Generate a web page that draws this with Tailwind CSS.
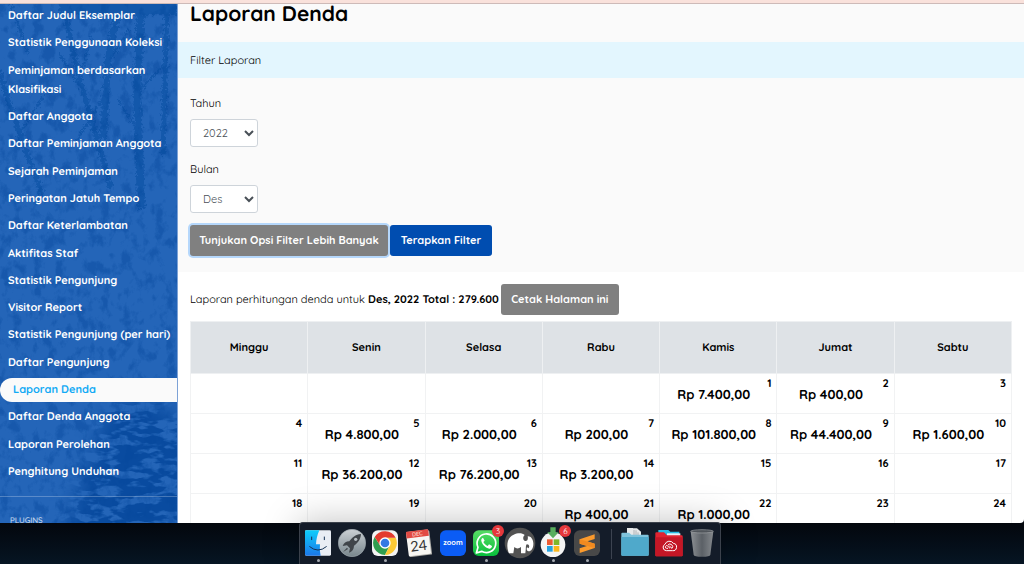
<!DOCTYPE html>
<html lang="id">
<head>
  <meta charset="UTF-8">
  <meta name="viewport" content="width=device-width, initial-scale=1.0">
  <title>Laporan Denda</title>
  <script src="https://cdn.jsdelivr.net/npm/@tailwindcss/browser@4"></script>
</head>
<body class="flex h-screen flex-col overflow-hidden bg-[#040b14] font-[Quicksand,Lato,sans-serif] text-[11px] text-black [text-rendering:geometricPrecision]">
  <div class="h-1 shrink-0 border-b border-[#cdbab8] bg-[#f9e1db]"></div>

  <div class="flex min-h-0 flex-1 overflow-hidden rounded-br bg-white">
    <aside class="relative w-[178px] shrink-0 overflow-hidden border-r border-[#7da2d6] bg-[#2465b8] font-bold text-white">
      <!-- forest and water texture -->
      <svg class="absolute inset-0 h-full w-full" viewBox="0 0 178 519" preserveAspectRatio="none" aria-hidden="true">
        <defs>
          <filter id="grain" x="0" y="0" width="100%" height="100%" color-interpolation-filters="sRGB">
            <feTurbulence type="fractalNoise" baseFrequency="0.09 0.07" numOctaves="6" seed="4"/>
            <feColorMatrix values="0 0 0 0 .02  0 0 0 0 .28  0 0 0 0 .61  5 0 0 0 -2.5"/>
          </filter>
          <filter id="waves" x="0" y="0" width="100%" height="100%" color-interpolation-filters="sRGB">
            <feTurbulence type="fractalNoise" baseFrequency="0.05 0.12" numOctaves="3" seed="7"/>
            <feColorMatrix values="0 0 0 0 .02  0 0 0 0 .28  0 0 0 0 .61  9 0 0 0 -3.7"/>
          </filter>
          <filter id="rough" x="-10%" y="-10%" width="120%" height="120%">
            <feTurbulence type="fractalNoise" baseFrequency="0.4" numOctaves="3" seed="2"/>
            <feDisplacementMap in="SourceGraphic" scale="8" xChannelSelector="R" yChannelSelector="G"/>
            <feGaussianBlur stdDeviation="0.6"/>
          </filter>
          <filter id="soft"><feGaussianBlur stdDeviation="10"/></filter>
          <mask id="bottom"><path d="M60 540 L85 470 L110 400 L150 395 L200 430 V540Z" fill="#fff" filter="url(#soft)"/></mask>
        </defs>
        <rect width="178" height="519" filter="url(#grain)" opacity=".4"/>
        <g filter="url(#rough)" fill="none" stroke="#06489c" opacity=".45">
          <path d="M142 -5L138 90L142 205" stroke-width="8"/>
          <path d="M120 -5L108 60L104 135" stroke-width="7"/>
          <path d="M62 -5L80 75L112 185" stroke-width="5"/>
          <path d="M-4 60L20 130L42 190M168 -5L164 150" stroke-width="5"/>
          <path d="M10 -5L28 50M80 75L92 30M85 90L60 50M108 60L130 25M106 90L75 140M138 90L165 60M140 130L118 95M20 130L45 90" stroke-width="2"/>
          <path d="M60 4H178" stroke-width="14"/>
        </g>
        <g mask="url(#bottom)"><rect y="370" width="178" height="149" filter="url(#waves)" opacity=".85"/></g>
      </svg>
      <nav class="relative">
        <ul class="mt-[2px] flex h-[475px] flex-col justify-between leading-[19px] whitespace-nowrap">
          <li class="px-2"><a href="#">Daftar Judul Eksemplar</a></li>
          <li class="px-2"><a href="#">Statistik Penggunaan Koleksi</a></li>
          <li class="px-2"><a href="#">Peminjaman berdasarkan<br>Klasifikasi</a></li>
          <li class="px-2"><a href="#">Daftar Anggota</a></li>
          <li class="px-2"><a href="#">Daftar Peminjaman Anggota</a></li>
          <li class="px-2"><a href="#">Sejarah Peminjaman</a></li>
          <li class="px-2"><a href="#">Peringatan Jatuh Tempo</a></li>
          <li class="px-2"><a href="#">Daftar Keterlambatan</a></li>
          <li class="px-2"><a href="#">Aktifitas Staf</a></li>
          <li class="px-2"><a href="#">Statistik Pengunjung</a></li>
          <li class="px-2"><a href="#">Visitor Report</a></li>
          <li class="px-2"><a href="#">Statistik Pengunjung (per hari)</a></li>
          <li class="px-2"><a href="#">Daftar Pengunjung</a></li>
          <li class="-mt-0.5 -mb-[3px] h-6 rounded-l-full bg-[#fafafa] pt-0.5 pl-[13px] text-[#12aaf5]"><a href="#">Laporan Denda</a></li>
          <li class="px-2"><a href="#">Daftar Denda Anggota</a></li>
          <li class="px-2"><a href="#">Laporan Perolehan</a></li>
          <li class="px-2"><a href="#">Penghitung Unduhan</a></li>
        </ul>
        <hr class="mt-[15px] border-white/25">
        <p class="mt-[15px] px-[10px] text-[8px] leading-4 font-medium text-white/80">PLUGINS</p>
      </nav>
    </aside>

    <main class="min-w-0 flex-1 overflow-hidden">
      <section class="bg-[#fafafa] pb-4">
        <h1 class="h-[38px] px-3 text-[21px] leading-5 font-bold text-black">Laporan Denda</h1>
        <div class="bg-[#e3f6fe] px-3 leading-9">Filter Laporan</div>
        <form class="px-3 pt-[15px]">
          <label for="year" class="block leading-5">Tahun</label>
          <select id="year" class="mt-[6px] block h-7 w-[68px] rounded-[3px] border border-[#ced4da] bg-white pl-2 text-[#495057]">
            <option>2022</option>
          </select>
          <label for="month" class="mt-3 block leading-5">Bulan</label>
          <select id="month" class="mt-[6px] block h-7 w-[68px] rounded-[3px] border border-[#ced4da] bg-white pl-2 text-[#495057]">
            <option>Des</option>
          </select>
          <div class="mt-3 flex gap-[2px] font-bold text-white">
            <button type="button" class="h-[31px] w-[198px] rounded-[3px] bg-[#808080] ring-2 ring-[#b5d7fb]">Tunjukan Opsi Filter Lebih Banyak</button>
            <button type="button" class="h-[31px] w-[102px] rounded-[3px] bg-[#004db0]">Terapkan Filter</button>
          </div>
        </form>
      </section>

      <section class="px-3 pt-3">
        <div class="flex items-center gap-0.5">
          <p>Laporan perhitungan denda untuk <strong class="font-bold">Des, 2022 Total : 279.600</strong></p>
          <button type="button" class="h-[31px] w-[118px] rounded-[3px] bg-[#808080] font-bold text-white">Cetak Halaman ini</button>
        </div>
        <div class="mt-[6px]">
          <table class="w-full table-fixed border-collapse font-bold text-black">
            <thead>
              <tr class="h-[52px] bg-[#dee2e6]">
                <th class="border border-[#eef0f2]">Minggu</th>
                <th class="border border-[#eef0f2]">Senin</th>
                <th class="border border-[#eef0f2]">Selasa</th>
                <th class="border border-[#eef0f2]">Rabu</th>
                <th class="border border-[#eef0f2]">Kamis</th>
                <th class="border border-[#eef0f2]">Jumat</th>
                <th class="border border-[#eef0f2]">Sabtu</th>
              </tr>
            </thead>
            <tbody id="calendar"></tbody>
          </table>
        </div>
      </section>
    </main>
  </div>

  <footer class="relative flex h-[41px] shrink-0 justify-center bg-linear-to-b from-[#03070d] to-[#061523] pr-1">
    <div class="-mt-px flex h-[42px] rounded-t border border-b-0 border-[#3b414b] bg-[#141c29] px-1 pt-[6px] shadow-[0_0_36px_rgba(0,0,0,0.25)]">
      <ul class="flex w-[297px] justify-between">
        <li class="flex flex-col items-center">
          <svg class="size-7" viewBox="0 0 84 84" role="img" aria-label="Finder">
            <defs><linearGradient id="fb" x2="0" y2="1"><stop stop-color="#0dcdfb"/><stop offset="1" stop-color="#1c78ea"/></linearGradient></defs>
            <rect x="3" y="4" width="78" height="76" rx="4" fill="#e9edf4"/>
            <path d="M7 4H46C39 20 37 32 36 46H48C47 60 48 70 50 80H7Q3 80 3 76V8Q3 4 7 4Z" fill="url(#fb)"/>
            <path d="M23 24V32M61 24V32M17 53Q42 74 67 53" fill="none" stroke="#153255" stroke-width="3" stroke-linecap="round"/>
          </svg>
          <span class="mt-0.5 size-[3px] rounded-full bg-[#a5aab1]"></span>
        </li>
        <li class="flex flex-col items-center">
          <svg class="size-7" viewBox="0 0 84 84" role="img" aria-label="Launchpad">
            <defs><linearGradient id="lp" x2="0" y2="1"><stop stop-color="#cbd0d4"/><stop offset="1" stop-color="#78868d"/></linearGradient></defs>
            <circle cx="42" cy="42" r="41" fill="url(#lp)" stroke="#9ba4aa" stroke-width="2"/>
            <path d="M69 15C52 16 42 26 34 37C24 37 17 43 14 51L27 49L36 58L33 71C42 68 48 61 48 50C59 42 68 32 69 15Z" fill="#40454a"/>
            <circle cx="53" cy="31" r="5" fill="#b4bbc0"/><path d="M27 56L15 69L30 60Z" fill="#40454a"/>
          </svg>
        </li>
        <li class="flex flex-col items-center">
          <svg class="size-7" viewBox="0 0 84 84" role="img" aria-label="Chrome">
            <rect x="3" y="4" width="78" height="77" rx="18" fill="#f3f3f3"/>
            <path d="M28 50L11 24A36 36 0 0 0 42 78L56 50Z" fill="#2f9e4f"/>
            <path d="M42 26H74A36 36 0 0 1 42 78L56 50Z" fill="#fcc934"/>
            <path d="M42 42L28 50L11 24A36 36 0 0 1 74 26H42Z" fill="#e33b2e"/>
            <circle cx="42" cy="42" r="17" fill="#fff"/><circle cx="42" cy="42" r="13" fill="#3379e4"/>
          </svg>
          <span class="mt-0.5 size-[3px] rounded-full bg-[#a5aab1]"></span>
        </li>
        <li class="flex flex-col items-center">
          <svg class="size-7" viewBox="0 0 84 84" role="img" aria-label="Kalender">
            <g transform="rotate(-7 42 42)">
              <rect x="9" y="8" width="68" height="73" rx="3" fill="#aaa9a5"/>
              <rect x="7" y="5" width="67" height="73" rx="3" fill="#f7f6f3"/>
              <path d="M10 4H71Q74 4 74 7V24H7V7Q7 4 10 4Z" fill="#e24a43"/>
              <text x="40" y="20" text-anchor="middle" font-size="16" fill="#ffe4df" font-family="Lato">DEC</text>
              <text x="40" y="65" text-anchor="middle" font-size="43" fill="#333" font-family="Lato">24</text>
            </g>
          </svg>
        </li>
        <li class="flex flex-col items-center">
          <svg class="size-7" viewBox="0 0 84 84" role="img" aria-label="Zoom">
            <rect x="3" y="4" width="78" height="77" rx="17" fill="#0b5cf5"/>
            <text x="42" y="49" text-anchor="middle" font-size="22" font-weight="700" fill="#fff" font-family="Quicksand">zoom</text>
          </svg>
        </li>
        <li class="relative flex flex-col items-center">
          <svg class="size-7" viewBox="0 0 84 84" role="img" aria-label="WhatsApp">
            <defs><linearGradient id="wa" x2="0" y2="1"><stop stop-color="#58dc65"/><stop offset="1" stop-color="#08bf3c"/></linearGradient></defs>
            <rect x="3" y="4" width="78" height="77" rx="17" fill="url(#wa)"/>
            <path d="M13 72L18 55A28 28 0 1 1 29 67Z" fill="none" stroke="#fff" stroke-width="5" stroke-linejoin="round"/>
            <path d="M33 26C29 27 27 31 28 36C31 48 41 57 52 59C57 59 60 55 60 51L51 46L47 51C41 49 37 44 34 39L38 35Z" fill="#fff"/>
          </svg>
          <span class="absolute -top-1 -right-1 size-3 rounded-full bg-[#e5383c] text-center text-[8px] leading-3 text-white">3</span>
          <span class="mt-0.5 size-[3px] rounded-full bg-[#a5aab1]"></span>
        </li>
        <li class="-mx-0.5 -mt-0.5 flex flex-col items-center">
          <svg class="size-8" viewBox="0 0 96 96" role="img" aria-label="MAMP">
            <circle cx="48" cy="48" r="46" fill="#525252"/>
            <path d="M13 74C6 54 11 30 29 23C42 17 55 18 62 24C55 31 57 40 64 42C70 43 73 36 71 28C80 27 87 36 88 48C89 63 82 73 74 73C68 72 67 67 69 61L74 64C78 56 74 52 69 52C64 54 67 63 64 79H51V60C44 66 36 65 31 60L28 79H15Z" fill="#fff"/>
          </svg>
        </li>
        <li class="relative flex flex-col items-center">
          <svg class="size-7 overflow-visible" viewBox="0 0 84 84" role="img" aria-label="Microsoft AutoUpdate">
            <circle cx="42" cy="47" r="37" fill="#f4f4f4"/>
            <path d="M24 31H41V48H24Z" fill="#ed5b32"/><path d="M44 31H61V48H44Z" fill="#7fb82b"/><path d="M24 51H41V68H24Z" fill="#26a2df"/><path d="M44 51H61V68H44Z" fill="#fbb81c"/>
            <path d="M34 -5H50V10H59L42 28L25 10H34Z" fill="#58ae5e"/>
          </svg>
          <span class="absolute -top-1 -right-1 size-3 rounded-full bg-[#e5383c] text-center text-[8px] leading-3 text-white">6</span>
          <span class="mt-0.5 size-[3px] rounded-full bg-[#a5aab1]"></span>
        </li>
        <li class="flex flex-col items-center">
          <svg class="size-7" viewBox="0 0 84 84" role="img" aria-label="Sublime Text">
            <rect x="3" y="4" width="78" height="77" rx="17" fill="#484848"/>
            <path d="M20 31L65 16V30L43 37L65 44V57L20 72V58L42 51L20 44Z" fill="#fb9a2c"/>
            <path d="M20 31L65 44V57L20 44Z" fill="#f18a20"/>
          </svg>
          <span class="mt-0.5 size-[3px] rounded-full bg-[#a5aab1]"></span>
        </li>
      </ul>
      <div class="ml-[10px] h-[30px] w-px bg-[#3c4350]"></div>
      <ul class="ml-[9px] flex w-[95px] justify-between">
        <li>
          <svg class="size-7 overflow-visible" viewBox="0 0 84 84" role="img" aria-label="Dokumen">
            <path d="M18 -3H36V30H18ZM36 -2H48L60 8V30H36Z" fill="#e7e9ea"/><path d="M39 3V20M45 4V20M51 10V20" stroke="#92999c" stroke-width="2"/>
            <path d="M1 14Q1 11 4 11H24L31 17H80Q83 17 83 20V77Q83 80 80 80H4Q1 80 1 77Z" fill="#7fc3dc"/>
            <path d="M1 24H83V77Q83 80 80 80H4Q1 80 1 77Z" fill="#4fa9cb"/>
          </svg>
        </li>
        <li>
          <svg class="size-7" viewBox="0 0 84 84" role="img" aria-label="Creative Cloud">
            <path d="M10 3H40L46 8H73V30H10Z" fill="#27bce2"/><path d="M36 13H76V30H36Z" fill="#e8f4f8"/>
            <path d="M1 13Q1 10 4 10H27L36 19H80Q83 19 83 22V79Q83 82 80 82H4Q1 82 1 79Z" fill="#e02431"/><path d="M1 25H83V79Q83 82 80 82H4Q1 82 1 79Z" fill="#c41726"/>
            <path d="M34 65A10 10 0 0 1 30 46A14 14 0 0 1 55 43A11 11 0 0 1 52 65Z" fill="none" stroke="#fff" stroke-width="3"/>
            <path d="M45 58L38 51A4 4 0 1 0 35 58H39M39 48A7 7 0 1 1 51 58L43 51" fill="none" stroke="#fff" stroke-width="3"/>
          </svg>
        </li>
        <li>
          <svg class="size-7" viewBox="0 0 84 84" role="img" aria-label="Sampah">
            <defs><linearGradient id="tr"><stop stop-color="#8c9094"/><stop offset=".5" stop-color="#5b6066"/><stop offset="1" stop-color="#85898d"/></linearGradient></defs>
            <path d="M8 7L17 77Q18 83 42 83T67 77L76 7Z" fill="url(#tr)"/>
            <ellipse cx="42" cy="7" rx="34" ry="5" fill="#50555b" stroke="#a2a5a8" stroke-width="2"/>
          </svg>
        </li>
      </ul>
    </div>
  </footer>

  <script>
    // first weekday column and the fines paid per date
    const firstColumn = 4;
    const lastDate = 31;
    const fines = {
      1: '7.400,00', 2: '400,00', 5: '4.800,00', 6: '2.000,00', 7: '200,00',
      8: '101.800,00', 9: '44.400,00', 10: '1.600,00', 12: '36.200,00',
      13: '76.200,00', 14: '3.200,00', 21: '400,00', 22: '1.000,00'
    };

    const calendar = document.getElementById('calendar');
    for (let start = 1 - firstColumn; start <= lastDate; start += 7) {
      const row = document.createElement('tr');
      row.className = 'h-10';
      for (let day = start; day < start + 7; day++) {
        const inMonth = day >= 1 && day <= lastDate;
        row.innerHTML += `<td class="border border-[#f1f2f3] p-0 pr-[5px] align-top">${inMonth ? `
          <div class="pt-px text-right leading-4">${day}</div>` : ''}${fines[day] ? `
          <div class="-mt-1 pr-1 text-center text-[13px] leading-4">Rp ${fines[day]}</div>` : ''}</td>`;
      }
      calendar.appendChild(row);
    }
  </script>
</body>
</html>
